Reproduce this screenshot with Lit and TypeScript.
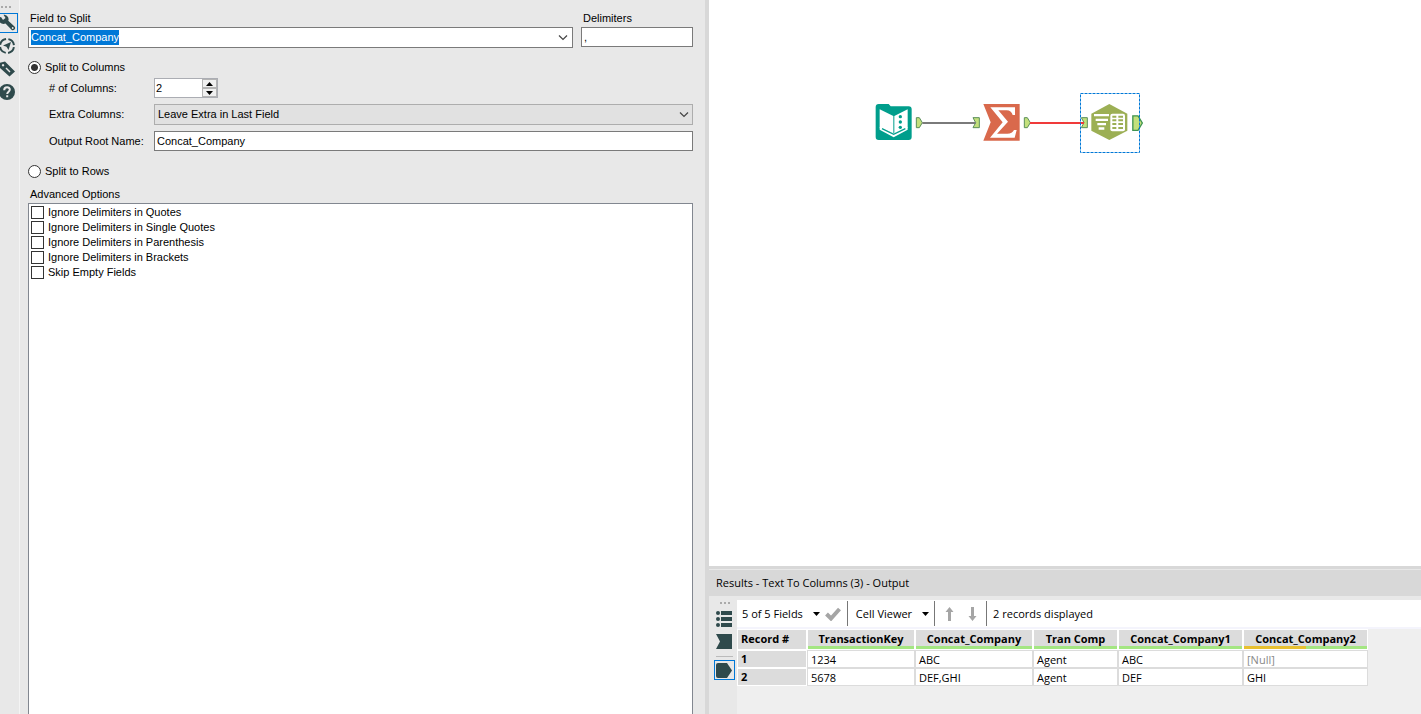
import { LitElement, html, css, svg } from "lit";
import { customElement } from "lit/decorators.js";

const caret = svg`<path d="M1 2.500l4 4 4-4" fill="none" stroke="#444" stroke-width="1.200"/>`;

@customElement("config-panel")
class ConfigPanel extends LitElement {
  static styles = css`
    :host { display: flex; min-width: 0; background: #e8e8e8; font: 11px/15px "Liberation Sans", Arial, sans-serif; color: #000; }
    * { box-sizing: border-box; }
    button, input, select { font: inherit; color: inherit; margin: 0; border-radius: 0; outline: none; }
    .strip { width: 20px; flex: none; border-right: 1px solid #f4f4f4; padding-top: 5px; display: flex; flex-direction: column; }
    .dots { width: 12px; height: 4px; margin-bottom: 4px; }
    .tool { width: 18px; height: 20px; border: 1px solid transparent; border-left: 0; padding: 0; background: none; margin-bottom: 3px; display: flex; align-items: center; }
    .tool.on { border-color: #0078d7; }
    .form { flex: 1; min-width: 0; padding: 11px 12px 0 8px; display: flex; flex-direction: column; }
    .top { display: grid; grid-template-columns: minmax(0, 1fr) 112px; column-gap: 8px; margin-bottom: 12px; }
    .cap { display: block; padding-left: 2px; height: 16px; }
    .box { display: block; width: 100%; height: 20px; border: 1px solid #7a7a7a; background: #fff; padding: 0 2px; }
    .combo { display: flex; height: 21px; border: 1px solid #7a7a7a; background: #fff; align-items: center; padding-right: 4px; }
    .combo input { flex: 1; min-width: 0; border: 0; padding: 0 2px; height: 15px; background: none; }
    .combo input::selection { background: #0078d7; color: #fff; }
    .drop { border: 0; padding: 0; background: none; width: 10px; height: 10px; display: flex; }
    .radio { display: flex; align-items: center; height: 15px; gap: 4px; }
    input[type="radio"], input[type="checkbox"] { appearance: none; width: 13px; height: 13px; border: 1px solid #333; background: #fff; flex: none; }
    input[type="radio"] { border-radius: 50%; }
    input[type="radio"]:checked { background: radial-gradient(circle, #333 0 3px, #fff 4px); }
    .fields { display: grid; grid-template-columns: 105px minmax(0, 1fr); padding-left: 21px; row-gap: 6px; align-items: center; margin-top: 3px; margin-bottom: 13px; }
    .spin { width: 64px; height: 20px; border: 1px solid #abadb3; background: #fff; display: flex; }
    .spin input { flex: 1; min-width: 0; border: 0; padding: 0 1px; background: none; appearance: textfield; }
    .spin input::-webkit-inner-spin-button { display: none; }
    .arrows { width: 15px; display: flex; flex-direction: column; }
    .arrows button { flex: 1; border: 1px solid #b4b4b4; background: #f0f0f0; padding: 0; display: flex; align-items: center; justify-content: center; }
    .pick { display: grid; align-items: center; }
    .pick select { appearance: none; width: 100%; height: 21px; border: 1px solid #adadad; background: #e1e1e1; padding: 0 20px 0 3px; grid-area: 1 / 1; }
    .pick svg { grid-area: 1 / 1; justify-self: end; margin-right: 4px; pointer-events: none; }
    .adv { margin-top: 8px; }
    .list { flex: 1; background: #fff; border: 1px solid #828790; border-bottom: 0; padding: 1px 2px; }
    .list label { display: flex; align-items: center; gap: 4px; height: 15px; }
  `;

  firstUpdated() {
    const field = this.renderRoot.querySelector<HTMLInputElement>("#field")!;
    field.focus();
    field.select();
  }

  render() {
    const options = ["Ignore Delimiters in Quotes", "Ignore Delimiters in Single Quotes", "Ignore Delimiters in Parenthesis", "Ignore Delimiters in Brackets", "Skip Empty Fields"];
    return html`
      <nav class="strip">
        <svg class="dots" viewBox="0 0 12 4"><path d="M1 1h2v2h-2zM5 1h2v2h-2zM9 1h2v2h-2z" fill="#aaa"/></svg>
        <button class="tool on" aria-label="Configuration"><svg width="17" height="18" viewBox="0 0 17 18"><path d="M-1 3.500L1 3l2 3 2.500-2L3.500.8C7 .6 9.500 4 8.300 6.800L14.500 12.500a2.200 2.200 0 0 1-3 3.200L5.500 9.500C3 10.500 0 9.500-1 7z" fill="#2f4a4c"/><circle cx="12.700" cy="14" r=".9" fill="#e8e8e8"/></svg></button>
        <button class="tool" aria-label="Navigation"><svg width="17" height="18" viewBox="0 0 17 18"><circle cx="7" cy="9" r="7" fill="none" stroke="#2f4a4c" stroke-width="2" stroke-dasharray="8.600 2.400" stroke-dashoffset="-1.200"/><path d="M11 5L8.500 13 6.500 9.700 3 8.500z" fill="#2f4a4c"/></svg></button>
        <button class="tool" aria-label="Annotation"><svg width="17" height="18" viewBox="0 0 17 18"><path fill-rule="evenodd" d="M-1 3L5 1.500 15 11.500 9.500 16.500-1 7zM3 4a1.200 1.200 0 1 0 .1 0zM6.500 7.500l-1 1 4 4 1-1z" fill="#2f4a4c"/></svg></button>
        <button class="tool" aria-label="Help"><svg width="17" height="18" viewBox="0 0 17 18"><circle cx="7" cy="9" r="8" fill="#2f4a4c"/><path d="M4.200 7.200C4.200 3.200 10 3.400 9.800 6.800 9.700 8.700 7.200 8.700 7.200 11M7.200 12.300v2" fill="none" stroke="#e8e8e8" stroke-width="2"/></svg></button>
      </nav>
      <main class="form">
        <div class="top">
          <div><label class="cap" for="field">Field to Split</label>
            <div class="combo"><input id="field" value="Concat_Company"><button class="drop" aria-label="Open list"><svg width="10" height="10">${caret}</svg></button></div></div>
          <div><label class="cap" for="delim">Delimiters</label><input class="box" id="delim" value=","></div>
        </div>
        <label class="radio"><input type="radio" name="mode" checked>Split to Columns</label>
        <div class="fields">
          <label for="count"># of Columns:</label>
          <div class="spin"><input id="count" type="number" value="2"><span class="arrows">
            <button aria-label="More"><svg width="7" height="4"><path d="M0 4L3.500 0 7 4z"/></svg></button>
            <button aria-label="Fewer"><svg width="7" height="4"><path d="M0 0L3.500 4 7 0z"/></svg></button></span></div>
          <label for="extra">Extra Columns:</label>
          <div class="pick"><select id="extra"><option>Leave Extra in Last Field</option></select><svg width="10" height="10">${caret}</svg></div>
          <label for="root">Output Root Name:</label><input class="box" id="root" value="Concat_Company">
        </div>
        <label class="radio"><input type="radio" name="mode">Split to Rows</label>
        <div class="cap adv">Advanced Options</div>
        <div class="list">${options.map((o) => html`<label><input type="checkbox">${o}</label>`)}</div>
      </main>`;
  }
}

@customElement("workflow-canvas")
class WorkflowCanvas extends LitElement {
  static styles = css`
    :host { display: block; position: relative; background: #fff; min-height: 0; overflow: hidden; }
    .flow { position: absolute; left: 151px; top: 85px; width: 300px; height: 75px; }
  `;
  render() {
    return html`<svg class="flow" viewBox="0 0 900 225" role="img" aria-label="Workflow">
      <path d="M56 57H86L92 64H146Q155 64 155 73V156Q155 165 146 165H56Q47 165 47 156V66Q47 57 56 57Z" fill="#009e8c"/>
      <path d="M59 73L100 93V145L59 128ZM103 93L143 73V128L103 145Z" fill="#fff"/>
      <path d="M59 134L101 157 143 134V126L101 145 59 126Z" fill="#fff"/>
      <path d="M66 131L101 148 136 131" fill="none" stroke="#009e8c" stroke-width="4"/>
      <g fill="#009e8c"><circle cx="121" cy="95" r="5"/><circle cx="121" cy="111" r="5"/><circle cx="121" cy="127" r="5"/></g>
      <g fill="#c3e07c" stroke="#5b8f5a" stroke-width="3">
        <path d="M169 98H178L187 113 178 128H169Z"/><path d="M339 98H358V128H339L347 113Z"/>
        <path d="M493 98H502L511 113 502 128H493Z"/><path d="M664 98H682V128H664L672 113Z"/>
        <path d="M818.500 92.500H834L847 114 834 136H818.500Z" stroke="#3f9450" stroke-width="4"/>
      </g>
      <path d="M187 114H347" stroke="#7a7a7a" stroke-width="6"/>
      <path d="M510 114H672" stroke="#f03a3a" stroke-width="6"/>
      <path d="M370 57H479V167H370L392 112Z" fill="#d9694c"/>
      <path d="M391 67H465V90H458Q454 76 440 76H415L444 110 411 146H442Q457 146 462 135H470L464 158H390L428 112Z" fill="#fff"/>
      <path d="M748 57L802 86V137L748 165 694 137V86Z" fill="#9caf54"/>
      <g fill="#fff"><path d="M702 87H747V94H702ZM707 101H744V108H707ZM712 114H738V121H712ZM716 127H733V134H716Z"/><rect x="751" y="86" width="44" height="53" rx="6"/></g>
      <path d="M757 95H769M775 95H789M757 106H769M775 106H789M757 117H769M775 117H789M757 129H769M775 129H789" stroke="#9caf54" stroke-width="6"/>
      <rect x="661.500" y="25.500" width="177" height="177" fill="none" stroke="#0078d7" stroke-width="3" stroke-dasharray="9 3"/>
    </svg>`;
  }
}

@customElement("results-panel")
class ResultsPanel extends LitElement {
  static styles = css`
    :host { display: block; background: #efefef; border-top: 3px solid #d8d8d8; font: 11px/16px "Open Sans", "Noto Sans", sans-serif; color: #000; }
    * { box-sizing: border-box; }
    .title { margin: 0; height: 27px; border-top: 1px solid #e8e8e8; background: #d8d8d8; padding: 0 7px; font: inherit; line-height: 26px; }
    .body { display: grid; grid-template-columns: 28px minmax(0, 1fr); min-height: 118px; border-top: 4px solid #e8e8e8; }
    .side { background: #e8e8e8; display: flex; flex-direction: column; align-items: center; padding: 2px 0 0 3px; }
    .side button { border: 1px solid transparent; background: none; padding: 0 0 0 1px; width: 21px; height: 20px; display: flex; align-items: center; margin-bottom: 3px; }
    .side .on { border-color: #0078d7; }
    .bar { background: #fff; border-bottom: 2px solid #f4f4fc; height: 29px; display: flex; align-items: center; }
    .bar button { font: inherit; color: inherit; border: 0; background: none; padding: 0; display: flex; align-items: center; gap: 10px; }
    .sep { width: 1px; height: 25px; background: #777; }
    .bar .fields { padding-left: 5px; }
    .bar .check { padding: 0 6px 0 5px; }
    .bar .viewer { padding: 0 5px 0 8px; }
    .bar .move { padding-left: 10px; }
    .bar .down { padding-left: 14px; padding-right: 9px; }
    .note { padding-left: 6px; }
    table { table-layout: fixed; border-collapse: separate; border-spacing: 0; width: 631px; line-height: 14px; }
    th, td { padding: 0 3px; white-space: nowrap; text-align: left; }
    thead th { height: 21px; border: 1px solid #fff; background: #dcdcdc; text-align: center; padding-bottom: 2px; }
    thead .data { background: linear-gradient(#a4e682, #a4e682) bottom / 100% 3px no-repeat padding-box, #dcdcdc; }
    thead .partial { background: linear-gradient(90deg, #e8c030 50%, #a4e682 50%) bottom / 100% 3px no-repeat padding-box, #dcdcdc; }
    thead .rec { text-align: left; }
    tbody th { background: #dcdcdc; border: 1px solid #fff; height: 18px; }
    td { height: 18px; border: 1px solid #dcdcdc; background: #fff; padding-top: 2px; }
    .null { color: #888; }
    .c0 { width: 70px; } .c1 { width: 108px; } .c2 { width: 118px; } .c3 { width: 85px; } .c4, .c5 { width: 125px; }
  `;
  render() {
    const heads = ["TransactionKey", "Concat_Company", "Tran Comp", "Concat_Company1", "Concat_Company2"];
    const rows = [["1234", "ABC", "Agent", "ABC", "[Null]"], ["5678", "DEF,GHI", "Agent", "DEF", "GHI"]];
    const tri = html`<svg width="7" height="4"><path d="M0 0H7L3.500 4Z"/></svg>`;
    return html`
      <h2 class="title">Results - Text To Columns (3) - Output</h2>
      <div class="body">
        <nav class="side">
          <svg width="12" height="6"><path d="M1 0h2v2h-2zM5 0h2v2h-2zM9 0h2v2h-2z" fill="#aaa"/></svg>
          <button aria-label="Messages"><svg width="16" height="17"><path d="M5 1H16V5H5ZM5 7H16V11H5ZM5 13H16V17H5Z" fill="#2f4a4c"/><g fill="#2f4a4c"><circle cx="2" cy="3" r="2"/><circle cx="2" cy="9" r="2"/><circle cx="2" cy="15" r="2"/></g></svg></button>
          <button aria-label="Input"><svg width="16" height="15"><path d="M0 0H16V15H0L4 7.500Z" fill="#2f4a4c"/></svg></button>
          <svg width="17" height="6"><path d="M0 2.500H17" stroke="#bbb"/></svg>
          <button class="on" aria-label="Output"><svg width="16" height="15"><path d="M2 0H11L16 7.500 11 15H2Q0 15 0 13V2Q0 0 2 0Z" fill="#2f4a4c"/></svg></button>
        </nav>
        <section>
          <div class="bar">
            <button class="fields">5 of 5 Fields ${tri}</button>
            <button class="check" aria-label="Apply"><svg width="16" height="14"><path d="M1.500 7L6 11.500 14.500 2" fill="none" stroke="#a5a5a5" stroke-width="4"/></svg></button>
            <span class="sep"></span>
            <button class="viewer">Cell Viewer ${tri}</button>
            <span class="sep"></span>
            <button class="move" aria-label="Previous"><svg width="9" height="14"><path d="M4.500 0L8.500 5H6V14H3V5H.5Z" fill="#a5a5a5"/></svg></button>
            <button class="move down" aria-label="Next"><svg width="9" height="14"><path d="M4.500 14L8.500 9H6V0H3V9H.5Z" fill="#a5a5a5"/></svg></button>
            <span class="sep"></span><span class="note">2 records displayed</span>
          </div>
          <table>
            <colgroup>${[0, 1, 2, 3, 4, 5].map((i) => html`<col class="c${i}">`)}</colgroup>
            <thead><tr><th class="rec">Record #</th>${heads.map((h, i) => html`<th class="data ${i === 4 ? "partial" : ""}">${h}</th>`)}</tr></thead>
            <tbody>${rows.map((r, i) => html`<tr><th>${i + 1}</th>${r.map((c) => html`<td class=${c === "[Null]" ? "null" : ""}>${c}</td>`)}</tr>`)}</tbody>
          </table>
        </section>
      </div>`;
  }
}

@customElement("app-root")
class AppRoot extends LitElement {
  static styles = css`
    :host { display: grid; grid-template-columns: minmax(0, 705fr) 4px minmax(0, 712fr); height: 100vh; overflow: hidden; }
    .split { background: #d8d8d8; }
    .work { display: grid; grid-template-rows: minmax(0, 1fr) auto; min-width: 0; min-height: 0; }
  `;
  render() {
    return html`<config-panel></config-panel><div class="split"></div>
      <div class="work"><workflow-canvas></workflow-canvas><results-panel></results-panel></div>`;
  }
}
